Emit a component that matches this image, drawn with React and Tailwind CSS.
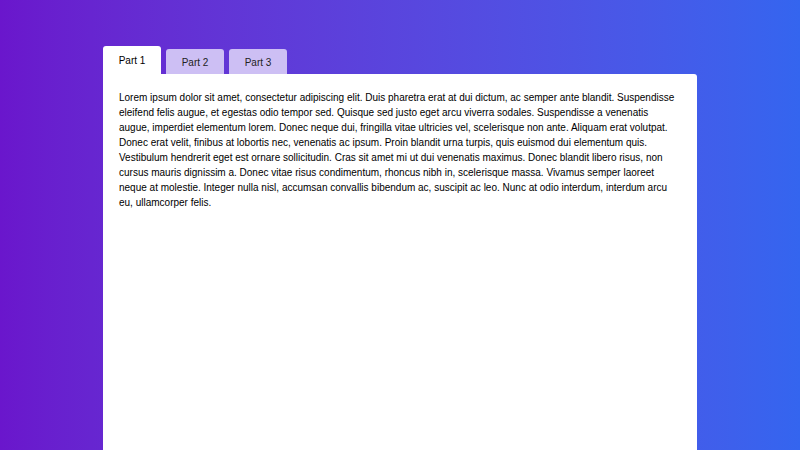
import React, { useState } from 'react';

const tabs = ['Part 1', 'Part 2', 'Part 3'];

const lorem =
    'Lorem ipsum dolor sit amet, consectetur adipiscing elit. Duis pharetra erat at dui dictum, ac semper ante blandit. Suspendisse eleifend felis augue, et egestas odio tempor sed. Quisque sed justo eget arcu viverra sodales. Suspendisse a venenatis augue, imperdiet elementum lorem. Donec neque dui, fringilla vitae ultricies vel, scelerisque non ante. Aliquam erat volutpat. Donec erat velit, finibus at lobortis nec, venenatis ac ipsum. Proin blandit urna turpis, quis euismod dui elementum quis. Vestibulum hendrerit eget est ornare sollicitudin. Cras sit amet mi ut dui venenatis maximus. Donec blandit libero risus, non cursus mauris dignissim a. Donec vitae risus condimentum, rhoncus nibh in, scelerisque massa. Vivamus semper laoreet neque at molestie. Integer nulla nisl, accumsan convallis bibendum ac, suscipit ac leo. Nunc at odio interdum, interdum arcu eu, ullamcorper felis.';

const App = () => {
    const [active, setActive] = useState(0);

    return (
        <div className="h-[450px] w-[800px] overflow-hidden bg-gradient-to-r from-[#6a16cc] to-[#3465ef] pl-[103px] pt-[46px] font-['Liberation_Sans',Arial,sans-serif]">
            <div className="flex h-[28px] items-end gap-[5px]">
                {tabs.map((tab, i) => (
                    <button
                        key={tab}
                        onClick={() => setActive(i)}
                        className={`w-[58px] rounded-t-[3px] text-[10px] ${active === i ? 'h-[28px] bg-white text-black' : 'h-[25px] bg-[#cdbff4] pt-[1px] text-[#222]'}`}
                    >
                        {tab}
                    </button>
                ))}
            </div>
            <div className="h-[400px] w-[594px] rounded-tr-[3px] bg-white px-[16px] pt-[16px] text-[10px] leading-[15px] text-black">
                {active === 0 ? lorem : ''}
            </div>
        </div>
    );
};

export default App;
